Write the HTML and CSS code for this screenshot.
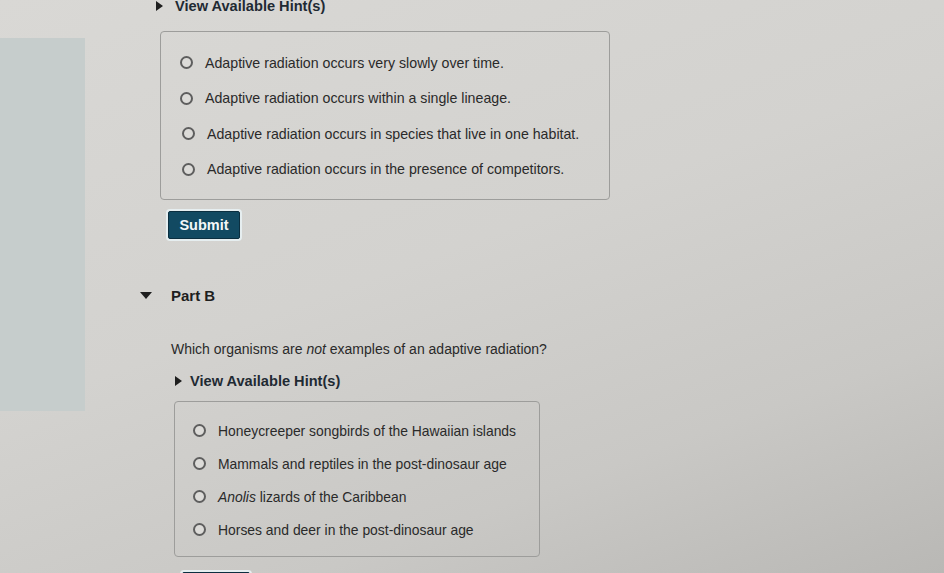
FILE: index.html
```html
<!DOCTYPE html>
<html>
<head>
<meta charset="utf-8">
<link rel="stylesheet" href="styles.css">
</head>
<body>
<div class="page">
  <div class="side"></div>
  <div class="main">
    <div class="hint hint-a"><span class="tri-right"></span><span class="hint-text">View Available Hint(s)</span></div>
    <div class="choices box-a">
      <label class="choice"><span class="radio"></span><span>Adaptive radiation occurs very slowly over time.</span></label>
      <label class="choice"><span class="radio"></span><span>Adaptive radiation occurs within a single lineage.</span></label>
      <label class="choice"><span class="radio"></span><span>Adaptive radiation occurs in species that live in one habitat.</span></label>
      <label class="choice"><span class="radio"></span><span>Adaptive radiation occurs in the presence of competitors.</span></label>
    </div>
    <button class="submit submit-a">Submit</button>
    <div class="part"><span class="tri-down"></span><span class="part-title">Part B</span></div>
    <p class="question">Which organisms are <em>not</em> examples of an adaptive radiation?</p>
    <div class="hint hint-b"><span class="tri-right"></span><span class="hint-text">View Available Hint(s)</span></div>
    <div class="choices box-b">
      <label class="choice"><span class="radio"></span><span>Honeycreeper songbirds of the Hawaiian islands</span></label>
      <label class="choice"><span class="radio"></span><span>Mammals and reptiles in the post-dinosaur age</span></label>
      <label class="choice"><span class="radio"></span><span><em>Anolis</em> lizards of the Caribbean</span></label>
      <label class="choice"><span class="radio"></span><span>Horses and deer in the post-dinosaur age</span></label>
    </div>
    <button class="submit submit-b">Submit</button>
  </div>
</div>
</body>
</html>
```
FILE: styles.css
```css
html, body {
  margin: 0;
  height: 100%;
  overflow: hidden;
}
body {
  background: linear-gradient(160deg, #d9d8d5 0%, #d3d2cf 45%, #c9c8c5 75%, #b9b8b5 100%);
  font-family: "Liberation Sans", Arial, sans-serif;
  color: #262626;
  font-size: 14px;
}
.page {
  display: flex;
  align-items: flex-start;
}
.side {
  width: 85px;
  height: 373px;
  margin-top: 38px;
  background: #c6cdcc;
  flex: none;
}
.main {
  margin-left: 51px;
  display: flex;
  flex-direction: column;
  align-items: flex-start;
}
.hint {
  display: flex;
  align-items: center;
  height: 18px;
  font-weight: bold;
  font-size: 14.6px;
  color: #1f2a33;
}
.hint-a { margin-top: -3px; margin-left: 20px; }
.hint-b { margin-top: 14px; margin-left: 39px; }
.hint-b .tri-right { margin-right: 8px; }
.tri-right {
  width: 0;
  height: 0;
  border-top: 5px solid transparent;
  border-bottom: 5px solid transparent;
  border-left: 7px solid #1e1e1e;
  margin-right: 12px;
}
.choices {
  border: 1px solid #9d9d9b;
  border-radius: 4px;
  display: flex;
  flex-direction: column;
  box-sizing: border-box;
}
.box-a {
  margin-top: 16px;
  margin-left: 24px;
  width: 450px;
  padding: 13px 0 12px 19px;
  font-size: 14.2px;
}
.box-a .choice { height: 35.5px; }
.box-a .choice:nth-child(3), .box-a .choice:nth-child(4) { padding-left: 2px; }
.box-b {
  margin-top: 11px;
  margin-left: 38px;
  width: 366px;
  padding: 12px 0 10px 18px;
  font-size: 13.9px;
}
.box-b .choice { height: 33px; }
.choice {
  display: flex;
  align-items: center;
  gap: 12px;
  color: #2a2a2a;
}
.radio {
  width: 9px;
  height: 9px;
  border: 2px solid #5e5e5e;
  border-radius: 50%;
  background: #dcdbd8;
  flex: none;
}
.submit {
  font-family: "Liberation Sans", Arial, sans-serif;
  font-size: 14.5px;
  font-weight: bold;
  color: #f4f7f8;
  background: #124a62;
  border: 1px solid #0b2f40;
  box-shadow: 0 0 0 2px #e6eef0;
  border-radius: 2px;
  padding: 0;
}
.submit-a {
  margin-top: 11px;
  margin-left: 32px;
  width: 72px;
  height: 28px;
}
.submit-b {
  margin-top: 15px;
  margin-left: 46px;
  width: 68px;
  height: 28px;
}
.part {
  display: flex;
  align-items: center;
  height: 18px;
  margin-top: 47px;
  margin-left: 4px;
  font-weight: bold;
  font-size: 15px;
  color: #1e1e1e;
}
.tri-down {
  width: 0;
  height: 0;
  border-left: 6px solid transparent;
  border-right: 6px solid transparent;
  border-top: 7px solid #1e1e1e;
  margin-right: 19px;
}
.question {
  margin: 36px 0 0 35px;
  height: 18px;
  line-height: 18px;
  color: #2a2a2a;
}
```
